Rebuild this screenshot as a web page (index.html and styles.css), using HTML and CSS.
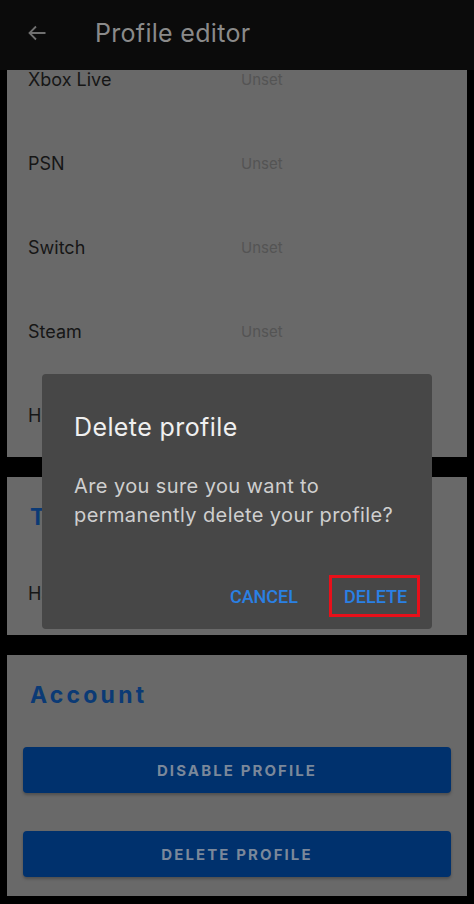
FILE: index.html
```html
<!DOCTYPE html>
<html lang="en">
<head>
    <meta charset="UTF-8">
    <meta name="viewport" content="width=device-width, initial-scale=1.0">
    <title>Profile editor</title>
    <link rel="stylesheet" href="styles.css">
</head>
<body>
    <header class="app-bar">
        <button class="back-button" aria-label="Back">
            <svg width="24" height="24" viewBox="0 0 24 24">
                <path d="M20.5 12H4.5M11 5.5l-6.5 6.5 6.5 6.5" fill="none" stroke="currentColor" stroke-width="1.8"/>
            </svg>
        </button>
        <h1 class="app-title">Profile editor</h1>
    </header>

    <main class="scroll-area">
        <div class="scroll-content">
            <section class="card">
                <div class="field-row">
                    <span class="field-name">Xbox Live</span>
                    <span class="field-value">Unset</span>
                </div>
                <div class="field-row">
                    <span class="field-name">PSN</span>
                    <span class="field-value">Unset</span>
                </div>
                <div class="field-row">
                    <span class="field-name">Switch</span>
                    <span class="field-value">Unset</span>
                </div>
                <div class="field-row">
                    <span class="field-name">Steam</span>
                    <span class="field-value">Unset</span>
                </div>
                <div class="field-row">
                    <span class="field-name">HoYoverse</span>
                    <span class="field-value">Unset</span>
                </div>
            </section>

            <section class="card">
                <h2 class="card-title">Twitch</h2>
                <div class="field-row">
                    <span class="field-name">Handle</span>
                    <span class="field-value">Unset</span>
                </div>
            </section>

            <section class="card account-card">
                <h2 class="card-title">Account</h2>
                <button class="account-button">Disable profile</button>
                <button class="account-button">Delete profile</button>
            </section>
        </div>
    </main>

    <div class="dialog" role="dialog">
        <h3 class="dialog-title">Delete profile</h3>
        <p class="dialog-message">Are you sure you want to permanently delete your profile?</p>
        <div class="dialog-actions">
            <button class="dialog-button">Cancel</button>
            <button class="dialog-button highlighted">Delete</button>
        </div>
    </div>
</body>
</html>
```

FILE: styles.css
```css
body {
    font-family: Inter, "Noto Sans", sans-serif;
    background-color: #000;
    margin: 0;
    padding: 0;
    width: 474px;
    height: 904px;
    overflow: hidden;
}

.app-bar {
    height: 70px;
    box-sizing: border-box;
    padding: 0 0 4px 25px;
    background-color: #0b0b0b;
    display: flex;
    align-items: center;
}

.back-button {
    border: none;
    background: none;
    padding: 0;
    color: #707070;
    display: flex;
    margin-right: 46px;
}

.app-title {
    margin: 0;
    font-size: 25px;
    font-weight: 400;
    color: #8a8a8a;
    letter-spacing: 0.3px;
}

.scroll-area {
    height: 834px;
    overflow: hidden;
}

/* list is scrolled a little past the top */
.scroll-content {
    margin-top: -33px;
}

.card {
    background-color: #696969;
    margin: 0 7px 20px;
    padding: 0 21px;
}

.field-row {
    height: 84px;
    display: flex;
    align-items: center;
}

.field-name {
    width: 213px;
    font-size: 18px;
    color: #161616;
}

.field-value {
    font-size: 15px;
    color: #545454;
}

.card-title {
    margin: 0 0 18px;
    padding-top: 24px;
    padding-left: 2px;
    line-height: 32px;
    font-size: 23px;
    font-weight: 700;
    letter-spacing: 3.2px;
    color: #0b3a75;
}

.account-card {
    padding: 0 16px 19px;
}

.account-card .card-title {
    margin-bottom: 36px;
    padding-left: 7px;
}

.account-button {
    display: block;
    width: 100%;
    height: 46px;
    border: none;
    border-radius: 4px;
    background-color: #00316d;
    color: #7b889a;
    font-family: Inter, sans-serif;
    font-size: 15px;
    font-weight: 700;
    letter-spacing: 2.1px;
    text-transform: uppercase;
    box-shadow: 0 2px 3px rgba(0, 0, 0, 0.25);
}

.account-button + .account-button {
    margin-top: 38px;
}

.dialog {
    position: absolute;
    left: 42px;
    top: 374px;
    width: 390px;
    height: 255px;
    box-sizing: border-box;
    background-color: #474747;
    border-radius: 4px;
    padding: 36px 32px 0;
    display: flex;
    flex-direction: column;
}

.dialog-title {
    margin: 0;
    font-size: 25px;
    font-weight: 400;
    line-height: 34px;
    letter-spacing: 0.4px;
    color: #f0f0f0;
}

.dialog-message {
    margin: 28px 0 0;
    font-size: 20px;
    line-height: 29px;
    letter-spacing: 0.4px;
    color: #cfcfcf;
}

.dialog-actions {
    margin-top: auto;
    margin-bottom: 12px;
    margin-right: -20px;
    display: flex;
    justify-content: flex-end;
    gap: 19px;
}

.dialog-button {
    border: none;
    background: none;
    font-family: Roboto, sans-serif;
    font-weight: 500;
    font-size: 18px;
    color: #2a80e4;
    text-transform: uppercase;
    height: 42px;
    padding: 0 12px;
    box-sizing: border-box;
}

.dialog-button.highlighted {
    border: 3px solid #e8101a;
    width: 91px;
}
```
